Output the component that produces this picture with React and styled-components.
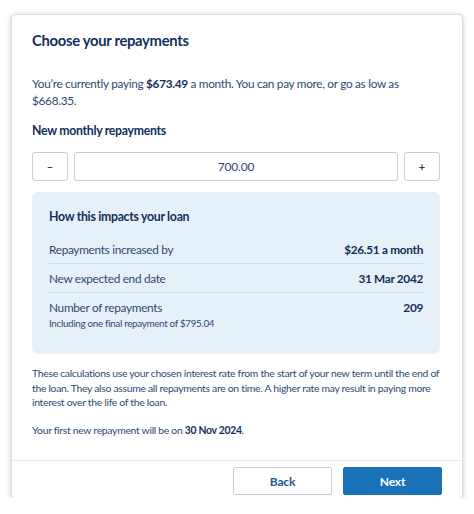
import React from 'react';
import styled, { createGlobalStyle } from 'styled-components';

const GlobalStyle = createGlobalStyle`
  html, body {
    margin: 0;
    padding: 0;
    background: #ffffff;
  }
  body {
    font-family: Lato, "Noto Sans", "Liberation Sans", sans-serif;
    color: #2b3d60;
    letter-spacing: -0.3px;
  }
`;

const Page = styled.div`
  padding: 15px 12px 0 12px;
`;

const Card = styled.section`
  width: 450px;
  height: 483px;
  box-sizing: border-box;
  background: #ffffff;
  border-radius: 4px;
  box-shadow: 0 0 0 1px #d9dfe9, 0 1px 5px 1px rgba(110, 130, 170, 0.45);
  display: flex;
  flex-direction: column;
`;

const Body = styled.div`
  flex: 1;
  padding: 15px 22px 0 20px;
`;

const Title = styled.h2`
  margin: 0;
  font-size: 14.8px;
  line-height: 20px;
  font-weight: 700;
  color: #12305c;
`;

const Lead = styled.p`
  margin: 25px 0 0;
  font-size: 11.8px;
  line-height: 17px;
  color: #2e4a72;

  b {
    color: #12305c;
    font-weight: 700;
  }
`;

const Label = styled.div`
  margin-top: 13px;
  font-size: 12.3px;
  line-height: 17px;
  font-weight: 700;
  color: #12305c;
`;

const Stepper = styled.div`
  margin-top: 13px;
  display: flex;
  gap: 6px;
  height: 29px;
`;

const StepButton = styled.button`
  width: 36px;
  flex: none;
  border: 1px solid #c8ced8;
  border-radius: 3px;
  background: #ffffff;
  color: #2b3d60;
  font-family: inherit;
  font-size: 11px;
  font-weight: 700;
  padding: 0;
`;

const AmountInput = styled.input`
  flex: 1;
  min-width: 0;
  border: 1px solid #c8ced8;
  border-radius: 3px;
  background: #ffffff;
  font-family: inherit;
  font-size: 12px;
  letter-spacing: -0.2px;
  color: #33466a;
  text-align: center;
  padding: 0;
`;

const Impact = styled.div`
  margin-top: 11px;
  background: #e5f0f8;
  border-radius: 6px;
  padding: 16px 17px 19px;
`;

const ImpactTitle = styled.div`
  font-size: 12.3px;
  line-height: 17px;
  font-weight: 700;
  color: #12305c;
  margin-bottom: 10px;
`;

const Row = styled.div`
  display: flex;
  justify-content: space-between;
  align-items: flex-start;
  padding: 6px 0 5px;
  border-bottom: ${p => (p.last ? 'none' : '1px solid #cfdde9')};
`;

const RowLabel = styled.div`
  font-size: 11.8px;
  line-height: 17px;
  color: #2e4a72;
`;

const RowNote = styled.div`
  font-size: 9.8px;
  line-height: 14px;
  color: #2e4a72;
`;

const RowValue = styled.div`
  font-size: 11.8px;
  line-height: 17px;
  font-weight: 700;
  color: #12305c;
`;

const Note = styled.p`
  margin: ${p => p.gap}px 0 0;
  font-size: 10.4px;
  line-height: 14.5px;
  color: #2e4a72;

  b {
    color: #12305c;
    font-weight: 700;
  }
`;

const Footer = styled.div`
  border-top: 1px solid #e6e9ef;
  padding: 6px 20px 3px;
  display: flex;
  justify-content: flex-end;
  gap: 11px;
`;

const ActionButton = styled.button`
  width: 99px;
  height: 28px;
  border-radius: 2px;
  font-family: inherit;
  font-size: 12px;
  font-weight: 700;
  letter-spacing: -0.2px;
  border: 1px solid ${p => (p.primary ? '#1a72b8' : '#c8ced8')};
  background: ${p => (p.primary ? '#1a72b8' : '#ffffff')};
  color: ${p => (p.primary ? '#ffffff' : '#1f5592')};
`;

const rows = [
  { label: 'Repayments increased by', value: '$26.51 a month' },
  { label: 'New expected end date', value: '31 Mar 2042' },
  { label: 'Number of repayments', value: '209', note: 'Including one final repayment of $795.04' },
];

export default function App() {
  return (
    <Page>
      <GlobalStyle />
      <Card>
        <Body>
          <Title>Choose your repayments</Title>
          <Lead>
            You’re currently paying <b>$673.49</b> a month. You can pay more, or go as low as
            $668.35.
          </Lead>
          <Label>New monthly repayments</Label>
          <Stepper>
            <StepButton>–</StepButton>
            <AmountInput defaultValue="700.00" />
            <StepButton>+</StepButton>
          </Stepper>
          <Impact>
            <ImpactTitle>How this impacts your loan</ImpactTitle>
            {rows.map((r, i) => (
              <Row key={r.label} last={i === rows.length - 1}>
                <div>
                  <RowLabel>{r.label}</RowLabel>
                  {r.note ? <RowNote>{r.note}</RowNote> : null}
                </div>
                <RowValue>{r.value}</RowValue>
              </Row>
            ))}
          </Impact>
          <Note gap={12}>
            These calculations use your chosen interest rate from the start of your new term until
            the end of the loan. They also assume all repayments are on time. A higher rate may
            result in paying more interest over the life of the loan.
          </Note>
          <Note gap={13}>
            Your first new repayment will be on <b>30 Nov 2024</b>.
          </Note>
        </Body>
        <Footer>
          <ActionButton>Back</ActionButton>
          <ActionButton primary>Next</ActionButton>
        </Footer>
      </Card>
    </Page>
  );
}
